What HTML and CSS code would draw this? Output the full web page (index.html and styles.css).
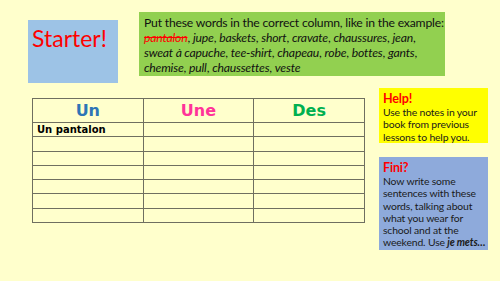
FILE: index.html
```html
<!DOCTYPE html>
<html lang="en">
<head>
<meta charset="utf-8">
<title>Starter</title>
<link rel="stylesheet" href="styles.css">
</head>
<body>
<div class="page">
  <div class="top">
    <div class="starter">Starter!</div>
    <div class="task">
      Put these words in the correct column, like in the example:<br>
      <i class="done">pantalon</i>, <i>jupe</i>, <i>baskets</i>, <i>short</i>, <i>cravate</i>, <i>chaussures</i>, <i>jean</i>,<br>
      <i>sweat à capuche</i>, <i>tee-shirt</i>, <i>chapeau</i>, <i>robe</i>, <i>bottes</i>, <i>gants</i>,<br>
      <i>chemise</i>, <i>pull</i>, <i>chaussettes</i>, <i>veste</i>
    </div>
  </div>
  <div class="bottom">
    <table class="grid">
      <thead>
        <tr><th class="un">Un</th><th class="une">Une</th><th class="des">Des</th></tr>
      </thead>
      <tbody>
        <tr><td>Un pantalon</td><td></td><td></td></tr>
        <tr><td></td><td></td><td></td></tr>
        <tr><td></td><td></td><td></td></tr>
        <tr><td></td><td></td><td></td></tr>
        <tr><td></td><td></td><td></td></tr>
        <tr><td></td><td></td><td></td></tr>
        <tr><td></td><td></td><td></td></tr>
      </tbody>
    </table>
    <div class="side">
      <div class="help">
        <div class="title">Help!</div>
        Use the notes in your<br>book from previous<br>lessons to help you.
      </div>
      <div class="fini">
        <div class="title">Fini?</div>
        Now write some<br>sentences with these<br>words, talking about<br>what you wear for<br>school and at the<br>weekend. Use <b><i>je mets…</i></b>
      </div>
    </div>
  </div>
</div>
</body>
</html>
```
FILE: styles.css
```css
html, body {
  margin: 0;
  padding: 0;
}
body {
  background: #ffffcc;
  width: 500px;
  height: 281px;
  overflow: hidden;
  font-family: Lato, "Liberation Sans", sans-serif;
  color: #111;
}
.page {
  display: flex;
  flex-direction: column;
}
.top {
  display: flex;
  align-items: flex-start;
  padding-top: 12px;
}
.starter {
  margin-top: 8px;
  margin-left: 28px;
  width: 90px;
  height: 63px;
  box-sizing: border-box;
  background: #9dc3e6;
  color: #ff0000;
  font-size: 23px;
  line-height: 28px;
  padding: 4px 0 0 4px;
}
.task {
  margin-left: 21px;
  width: 306px;
  height: 64px;
  box-sizing: border-box;
  background: #92d050;
  font-size: 12.2px;
  letter-spacing: -0.2px;
  line-height: 15px;
  padding: 3px 0 0 5px;
  white-space: nowrap;
}
.task i.done {
  color: #ff0000;
  text-decoration: line-through;
  text-decoration-color: #ff0000;
}
.bottom {
  display: flex;
  align-items: flex-start;
  padding-left: 32px;
}
.grid {
  margin-top: 15px;
  width: 333px;
  border-collapse: collapse;
  table-layout: fixed;
  font-family: "DejaVu Sans", Verdana, sans-serif;
  font-weight: bold;
}
.grid th, .grid td {
  border: 1px solid #6f6f60;
  padding: 0 0 0 4px;
  text-align: left;
}
.grid th {
  height: 23px;
  font-size: 16px;
  text-align: center;
  padding: 0;
}
.grid td {
  height: 13.3px;
  font-size: 10px;
  line-height: 13px;
  color: #000;
}
.grid .un { color: #2e75b6; }
.grid .une { color: #ff3399; }
.grid .des { color: #00b050; }
.side {
  margin-top: 5px;
  margin-left: 14px;
  width: 109px;
  display: flex;
  flex-direction: column;
  gap: 14px;
}
.help, .fini {
  box-sizing: border-box;
  font-size: 10.4px;
  letter-spacing: -0.15px;
  line-height: 12.3px;
  padding: 3px 0 0 4px;
  white-space: nowrap;
  color: #1a1a1a;
}
.help {
  height: 55px;
  background: #ffff00;
}
.fini {
  height: 93px;
  background: #8eaadb;
}
.title {
  color: #ff0000;
  font-weight: bold;
  font-size: 12.5px;
  line-height: 15px;
}
```
